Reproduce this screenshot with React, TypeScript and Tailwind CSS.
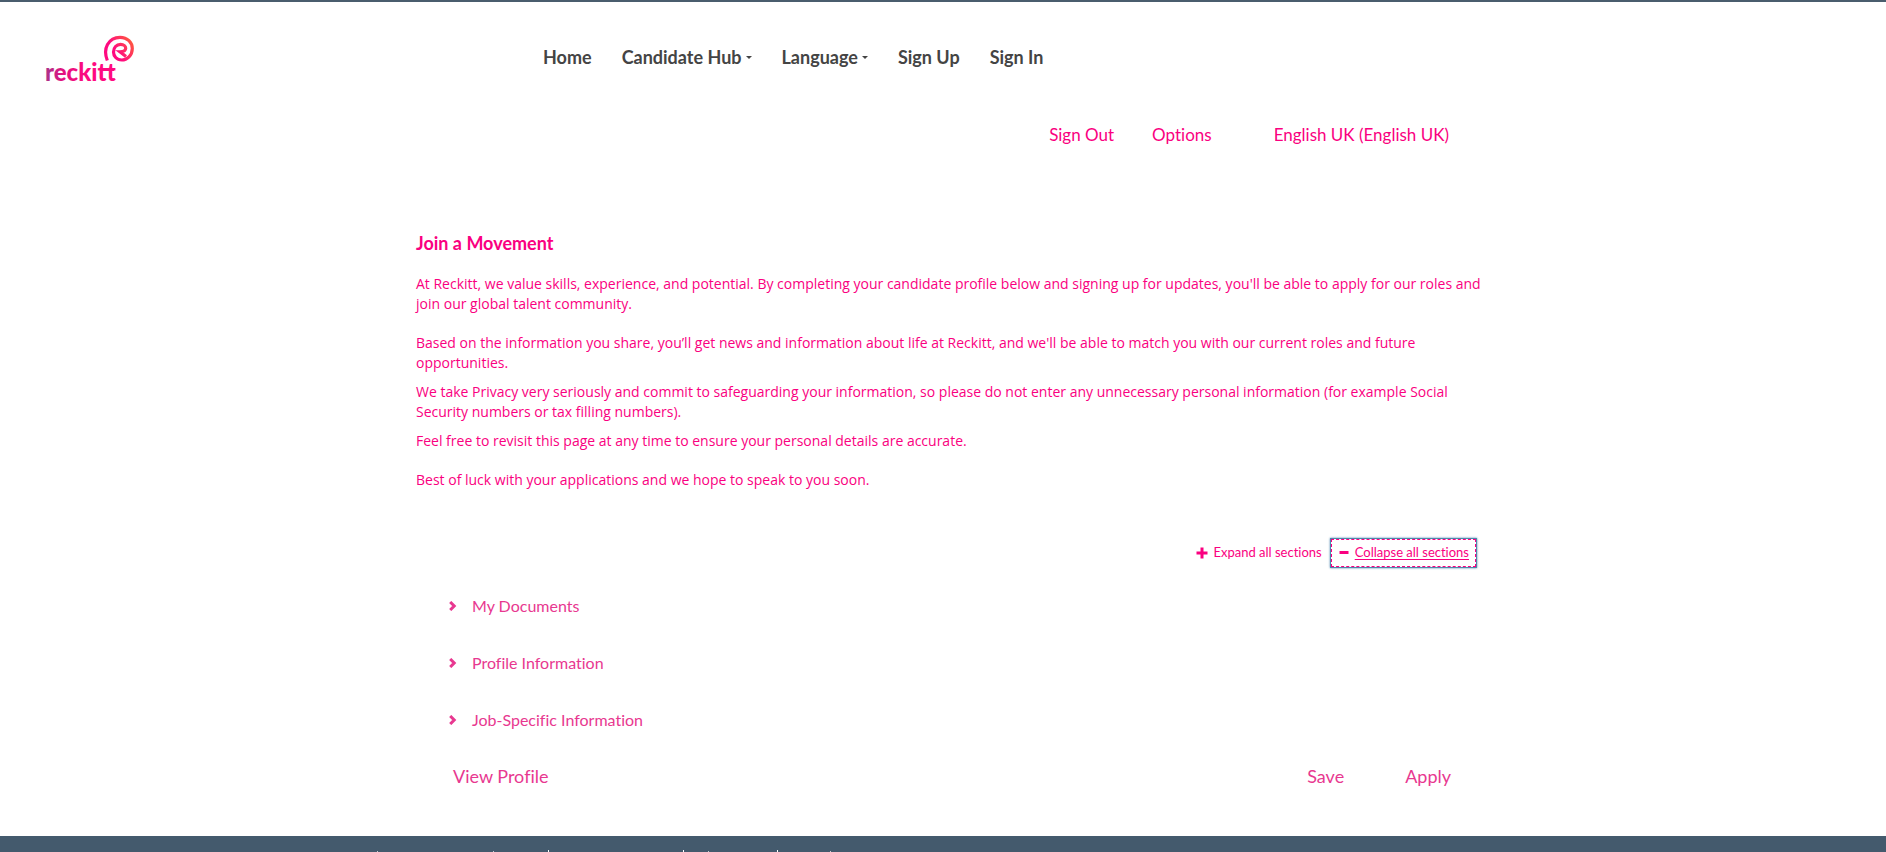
import { useState } from "react";

const navItems = [
  { label: "Home", menu: false },
  { label: "Candidate Hub", menu: true },
  { label: "Language", menu: true },
  { label: "Sign Up", menu: false },
  { label: "Sign In", menu: false },
];

const sections = ["My Documents", "Profile Information", "Job-Specific Information"];

function Logo() {
  return (
    <svg width="92" height="50" viewBox="0 0 92 50" role="img" aria-label="reckitt">
      <defs>
        <linearGradient id="word" x1="0" y1="0" x2="72" y2="0" gradientUnits="userSpaceOnUse">
          <stop offset="0" stopColor="#a8328c" />
          <stop offset="0.25" stopColor="#e3127f" />
          <stop offset="0.6" stopColor="#ff0a80" />
        </linearGradient>
        <linearGradient id="swirl" x1="64" y1="22" x2="88" y2="6" gradientUnits="userSpaceOnUse">
          <stop offset="0.3" stopColor="#ff0a80" />
          <stop offset="1" stopColor="#ff5a3c" />
        </linearGradient>
      </defs>
      <text
        x="0"
        y="46"
        fill="url(#word)"
        className="font-['Lato'] text-[24px] font-black"
      >
        reckitt
      </text>
      {/* crossbar shared by the double t */}
      <path d="M55 34.5h14" stroke="#ff0a80" strokeWidth="3" />
      <path
        d="M62.3 25.5C60.2 20 60 14 62.5 9.5C65.5 4.3 70.5 2.3 75 2.3C82.5 2.3 87.3 7.5 87.3 13.5C87.3 20.5 82 25 76.8 25C71.5 25 68.5 21 68.5 17C68.5 12.5 71.5 9.3 75.5 9.3C79 9.3 80.7 11.5 80.7 13.3C80.7 16 78.5 16.8 75 16.8L81 21.5"
        fill="none"
        stroke="url(#swirl)"
        strokeWidth="3.2"
      />
    </svg>
  );
}

function PlusIcon() {
  return (
    <svg width="12" height="12" viewBox="0 0 12 12" aria-hidden="true">
      <path d="M4.5 0.5h3v4h4v3h-4v4h-3v-4h-4v-3h4z" fill="currentColor" />
    </svg>
  );
}

function MinusIcon() {
  return (
    <svg width="10" height="12" viewBox="0 0 10 12" aria-hidden="true">
      <path d="M0.5 4h9v3h-9z" fill="currentColor" />
    </svg>
  );
}

function ChevronIcon() {
  return (
    <svg width="8" height="10" viewBox="0 0 8 10" aria-hidden="true">
      <path d="M1.2 1L5.2 5L1.2 9" fill="none" stroke="currentColor" strokeWidth="3" />
    </svg>
  );
}

export default function App() {
  const [open, setOpen] = useState<string[]>([]);

  const toggle = (name: string) =>
    setOpen(open.includes(name) ? open.filter((s) => s !== name) : [...open, name]);

  return (
    <div className="border-t-2 border-[#4a5d6d] bg-white font-['Lato',sans-serif] [font-variant-ligatures:none]">
      <header className="flex items-start pt-[33px] pr-8 pb-[17px] pl-[45px]">
        <a href="#home" className="shrink-0">
          <Logo />
        </a>
        <nav className="mt-[10px] ml-[406px]">
          <ul className="flex gap-[30px] text-[18px] leading-6 font-bold text-[#444444]">
            {navItems.map((item) => (
              <li key={item.label}>
                <a href="#nav" className="flex items-center gap-1 whitespace-nowrap">
                  {item.label}
                  {item.menu && (
                    <svg width="6" height="3" viewBox="0 0 6 3" aria-hidden="true">
                      <path d="M0 0h6L3 3z" fill="currentColor" />
                    </svg>
                  )}
                </a>
              </li>
            ))}
          </ul>
        </nav>
      </header>

      <main className="mx-auto max-w-[1170px] pr-10 pl-[58px] text-[#fa0080]">
        <div className="flex justify-end pt-[21px] pr-[39px] text-[17px] leading-6">
          <a href="#signout">Sign Out</a>
          <a href="#options" className="ml-[38px]">
            Options
          </a>
          <a href="#language" className="ml-[62px]">
            English UK (English UK)
          </a>
        </div>

        <h1 className="mt-[84px] text-[18px] leading-6 font-bold">Join a Movement</h1>
        <div className="mt-[19px] font-['Open_Sans',sans-serif] text-[14px] leading-5">
          <p>
            At Reckitt, we value skills, experience, and potential. By completing your candidate
            profile below and signing up for updates, you'll be able to apply for our roles and
            <br />
            join our global talent community.
          </p>
          <p className="mt-[19px]">
            Based on the information you share, you’ll get news and information about life at
            Reckitt, and we'll be able to match you with our current roles and future
            <br />
            opportunities.
          </p>
          <p className="mt-[9px]">
            We take Privacy very seriously and commit to safeguarding your information, so please do
            not enter any unnecessary personal information (for example Social
            <br />
            Security numbers or tax filling numbers).
          </p>
          <p className="mt-[9px]">
            Feel free to revisit this page at any time to ensure your personal details are accurate.
          </p>
          <p className="mt-[19px]">
            Best of luck with your applications and we hope to speak to you soon.
          </p>
        </div>

        <div className="mt-12 flex items-center justify-end gap-2 pr-[11px] text-[13px]">
          <button
            type="button"
            onClick={() => setOpen(sections)}
            className="flex h-[30px] items-center gap-[5px]"
          >
            <PlusIcon />
            Expand all sections
          </button>
          <button
            type="button"
            onClick={() => setOpen([])}
            className="flex h-[30px] items-center border border-[#4f86ad] shadow-[0_0_2px_#4f86ad]"
          >
            <span className="flex h-full items-center gap-[6px] border border-dashed border-[#fa0080] pr-[6px] pl-[7px]">
              <MinusIcon />
              <span className="underline underline-offset-2">Collapse all sections</span>
            </span>
          </button>
        </div>

        <div className="mt-[9px] pl-[33px] text-[16px] text-[#e83890]">
          {sections.map((name) => (
            <button
              key={name}
              type="button"
              aria-expanded={open.includes(name)}
              onClick={() => toggle(name)}
              className="flex h-[57px] w-full items-center gap-[15px] text-left"
            >
              <ChevronIcon />
              {name}
            </button>
          ))}
        </div>

        <div className="mt-4 flex pr-[37px] pl-[37px] text-[18px] leading-6 text-[#e83890]">
          <button type="button">View Profile</button>
          <button type="button" className="ml-auto">
            Save
          </button>
          <button type="button" className="ml-[61px]">
            Apply
          </button>
        </div>
      </main>

      <footer className="mt-12 h-4 overflow-hidden bg-[#445a6d] pt-[14px]">
        <ul className="mx-auto flex h-4 max-w-[1170px]">
          <li className="flex w-[190px] gap-[115px] pt-px pl-[19px]">
            <span className="size-px bg-white/70" />
            <span className="size-px bg-white/70" />
          </li>
          <li className="w-[135px] border-l border-white" />
          <li className="w-[94px] border-l border-white pt-px pl-[24px]">
            <span className="block size-px bg-white/70" />
          </li>
          <li className="border-l border-white pt-px pl-[52px]">
            <span className="block size-px bg-white/70" />
          </li>
        </ul>
      </footer>
    </div>
  );
}
